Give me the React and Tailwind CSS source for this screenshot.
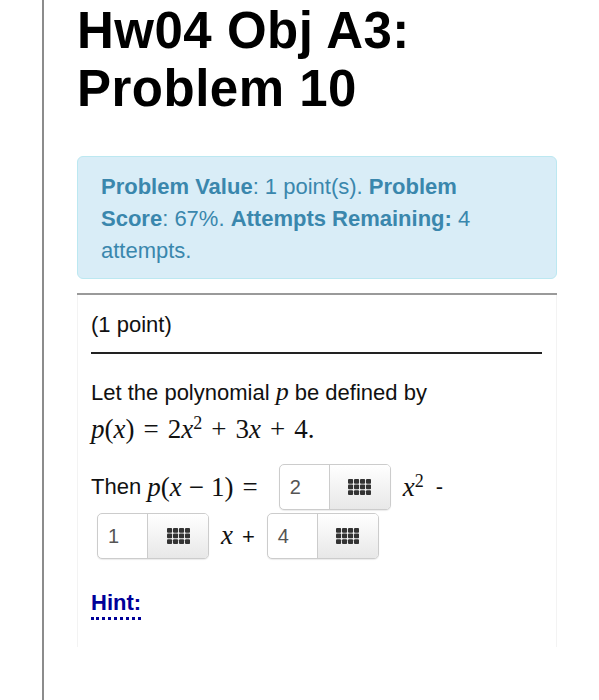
import React from "react";

const sans = { fontFamily: '"Liberation Sans", Arial, sans-serif' };
const serif = { fontFamily: '"Liberation Serif", "Times New Roman", serif' };

function GridIcon() {
  const cells = [];
  for (let r = 0; r < 3; r++) {
    for (let c = 0; c < 4; c++) {
      cells.push(<rect key={`${r}-${c}`} x={c * 6} y={r * 5.6} width="5.1" height="4.7" rx="1" fill="#333" />);
    }
  }
  return (
    <svg width="23" height="16" viewBox="0 0 23 16">
      {cells}
    </svg>
  );
}

function AnswerBox({ value }) {
  return (
    <span className="mx-[6px] inline-flex h-[46px] w-[112px] overflow-hidden rounded-[5px] border border-[#cccccc] bg-white shadow-[0_1px_1px_rgba(0,0,0,0.08)] align-middle">
      <span className="flex w-[49px] items-center pl-[10px] text-[20px] text-[#555]" style={sans}>{value}</span>
      <span className="flex flex-1 items-center justify-center border-l border-[#cccccc] bg-gradient-to-b from-white to-[#e8e8e8]">
        <GridIcon />
      </span>
    </span>
  );
}

export default function App() {
  return (
    <div className="min-h-screen bg-white pl-[42px]" style={sans}>
      <div className="min-h-screen border-l-2 border-[#8c8c8c] pl-[33px]">
        <div className="w-[480px] pt-[2px]">
          <h1 className="text-[51px] font-bold leading-[58px] tracking-[0.5px] text-black">
            Hw04 Obj A3:
            <br />
            Problem 10
          </h1>

          <div className="mt-[38px] rounded-[6px] border border-[#bce8f1] bg-[#d9edf7] pb-[11px] pl-[23px] pr-[55px] pt-[14px] text-[22px] leading-[32px] text-[#3a87ad]">
            <b>Problem Value</b>: 1 point(s). <b>Problem Score</b>: 67%. <b>Attempts Remaining:</b> 4 attempts.
          </div>

          <div className="mt-[14px] h-[2px] bg-[#9a9a9a]" />

          <div className="border-x border-[#f3f3f3] pb-[27px] pl-[13px] pr-[14px] pt-[14px] text-[22px] leading-[32px] text-[#111]">
            <div>(1 point)</div>
            <div className="mt-[11px] h-[2px] bg-[#222]" />

            <div className="mt-[22px]">
              Let the polynomial <span className="italic text-[26px]" style={serif}>p</span> be defined by
            </div>
            <div className="mt-[4px] text-[27px]" style={serif}>
              <i>p</i>(<i>x</i>)<span className="mx-[9px]">=</span>2<i>x</i>
              <sup className="text-[18px]">2</sup>
              <span className="mx-[9px]">+</span>3<i>x</i>
              <span className="mx-[9px]">+</span>4.
            </div>

            <div className="mt-[19px] flex flex-wrap items-center gap-y-[3px]">
              <span>Then&nbsp;</span>
              <span className="text-[27px]" style={serif}>
                <i>p</i>(<i>x</i>
                <span className="mx-[7px]">−</span>1)
                <span className="ml-[9px]">=</span>
              </span>
              <span className="w-[15px]" />
              <AnswerBox value="2" />
              <span className="ml-[6px] text-[27px]" style={serif}>
                <i>x</i>
                <sup className="text-[18px]">2</sup>
              </span>
              <span className="ml-[12px]">-</span>
              <AnswerBox value="1" />
              <span className="ml-[6px] mr-[6px]">
                <i className="text-[27px]" style={serif}>x</i>
                <span className="ml-[9px]">+</span>
              </span>
              <AnswerBox value="4" />
            </div>

            <div className="mt-[28px]">
              <span className="inline-block border-b-[3px] border-dotted border-[#000099] text-[22px] font-bold leading-[28px] text-[#000099]">
                Hint:
              </span>
            </div>
          </div>
        </div>
      </div>
    </div>
  );
}
